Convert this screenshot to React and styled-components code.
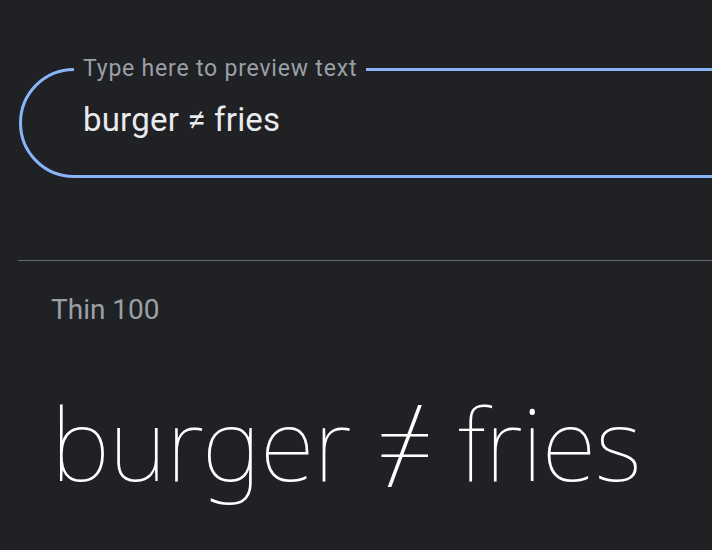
import React, { useState } from "react";
import styled, { createGlobalStyle } from "styled-components";

const GlobalStyle = createGlobalStyle`
  html, body {
    margin: 0;
    padding: 0;
    background: #202124;
  }
  body {
    font-family: Roboto, "Liberation Sans", sans-serif;
    overflow: hidden;
  }
`;

export default function App() {
  const [text, setText] = useState("burger ≠ fries");

  return (
    <Page>
      <GlobalStyle />
      <PreviewField>
        <FieldLabel>Type here to preview text</FieldLabel>
        <PreviewInput
          value={text}
          onChange={(event) => setText(event.currentTarget.value)}
        />
      </PreviewField>
      <Divider />
      <StyleBlock>
        <StyleName>Thin 100</StyleName>
        <Specimen weight={100}>{text}</Specimen>
      </StyleBlock>
    </Page>
  );
}

const Page = styled.div`
  width: 712px;
  height: 550px;
  overflow: hidden;
  padding-top: 55px;
  box-sizing: border-box;
`;

const PreviewField = styled.fieldset`
  margin: 0 0 0 19px;
  padding: 17px 0 36px 0;
  width: 900px;
  border: 3px solid #8ab4f8;
  border-radius: 56px 0 0 56px;
  box-sizing: border-box;
`;

const FieldLabel = styled.legend`
  margin-left: 52px;
  padding: 0 9px;
  font-size: 23px;
  line-height: 28px;
  letter-spacing: 0.8px;
  color: #9aa0a6;
`;

const PreviewInput = styled.input`
  display: block;
  width: 100%;
  box-sizing: border-box;
  margin: 0;
  padding: 0 0 0 61px;
  border: none;
  outline: none;
  background: transparent;
  font-family: Roboto, "Liberation Sans", sans-serif;
  font-size: 33px;
  line-height: 39px;
  height: 39px;
  letter-spacing: 0.2px;
  color: #e8eaed;
`;

const Divider = styled.div`
  margin: 82px 0 0 18px;
  height: 1px;
  background: #64676b;
`;

const StyleBlock = styled.div`
  padding: 31px 0 0 51px;
`;

const StyleName = styled.div`
  font-size: 28px;
  line-height: 36px;
  color: #9aa0a6;
`;

const Specimen = styled.div`
  margin-top: 54px;
  font-family: "Noto Sans", sans-serif;
  font-weight: ${(props) => props.weight};
  font-size: 101px;
  line-height: 1.2;
  letter-spacing: -0.9px;
  color: #ffffff;
  white-space: nowrap;
`;
